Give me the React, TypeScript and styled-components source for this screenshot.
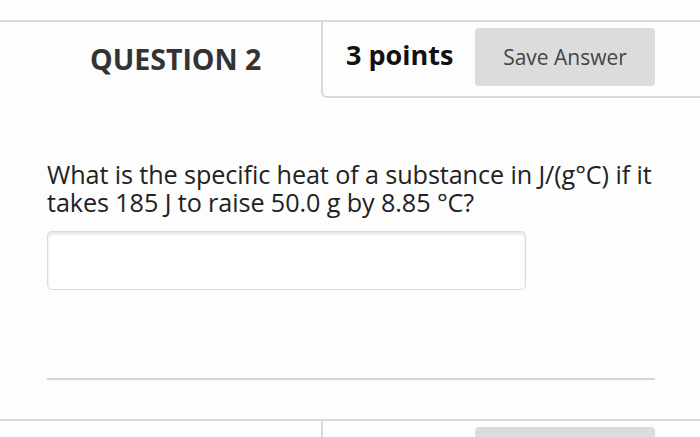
import styled, { createGlobalStyle } from "styled-components";

const GlobalStyle = createGlobalStyle`
  html, body {
    margin: 0;
    padding: 0;
    background: #fdfdfd;
    font-family: "Open Sans", "Noto Sans", sans-serif;
  }
`;

const Page = styled.div`
  padding-top: 20px;
`;

const QuestionBlock = styled.section`
  border-top: 2px solid #d9d9d9;
`;

const Header = styled.div`
  display: flex;
  height: 76px;
`;

const Title = styled.h2`
  margin: 0;
  width: 232px;
  padding-left: 90px;
  font-size: 28.5px;
  font-weight: 700;
  color: #333;
  line-height: 74px;
  white-space: nowrap;
`;

const PointsBox = styled.div`
  flex: 1;
  display: flex;
  align-items: center;
  gap: 23px;
  padding: 0 45px 0 23px;
  border-left: 2px solid #d9d9d9;
  border-bottom: 2px solid #d9d9d9;
  border-bottom-left-radius: 6px;
`;

const Points = styled.span`
  width: 106px;
  margin-bottom: 9px;
  font-size: 27px;
  font-weight: 700;
  color: #111;
  white-space: nowrap;
`;

const SaveButton = styled.button`
  width: 180px;
  height: 58px;
  border: none;
  border-radius: 4px;
  background: #dcdcdc;
  color: #444;
  font-family: "Open Sans", "Noto Sans", sans-serif;
  font-size: 21px;
  margin-bottom: 5px;
`;

const Body = styled.div`
  padding: 62px 45px 39px 47px;
`;

const Prompt = styled.p`
  margin: 0;
  font-size: 25.2px;
  line-height: 28px;
  letter-spacing: -0.1px;
  color: #222;
`;

const AnswerInput = styled.input`
  display: block;
  box-sizing: border-box;
  margin-top: 15px;
  width: 479px;
  height: 59px;
  border: 1px solid #dcdcdc;
  border-radius: 5px;
  box-shadow: inset 0 2px 3px rgba(0, 0, 0, 0.12);
  background: #fff;
`;

const Divider = styled.hr`
  margin: 88px 0 0;
  border: none;
  border-top: 2px solid #d6d6d6;
`;

type Question = { n: number; points: number; text: string; peek?: boolean };

const questions: Question[] = [
  {
    n: 2,
    points: 3,
    text: "What is the specific heat of a substance in J/(g°C) if it takes 185 J to raise 50.0 g by 8.85 °C?",
  },
  // next question, only its top edge shows below the fold
  { n: 3, points: 3, text: "", peek: true },
];

export default function App() {
  return (
    <Page>
      <GlobalStyle />
      {questions.map((q) => (
        <QuestionBlock key={q.n}>
          <Header>
            <Title>{q.peek ? "" : `QUESTION ${q.n}`}</Title>
            <PointsBox>
              <Points>{q.peek ? "" : `${q.points} points`}</Points>
              <SaveButton aria-label="Save Answer">
                {q.peek ? "" : "Save Answer"}
              </SaveButton>
            </PointsBox>
          </Header>
          {!q.peek && (
            <Body>
              <Prompt>{q.text}</Prompt>
              <AnswerInput type="text" />
              <Divider />
            </Body>
          )}
        </QuestionBlock>
      ))}
    </Page>
  );
}
